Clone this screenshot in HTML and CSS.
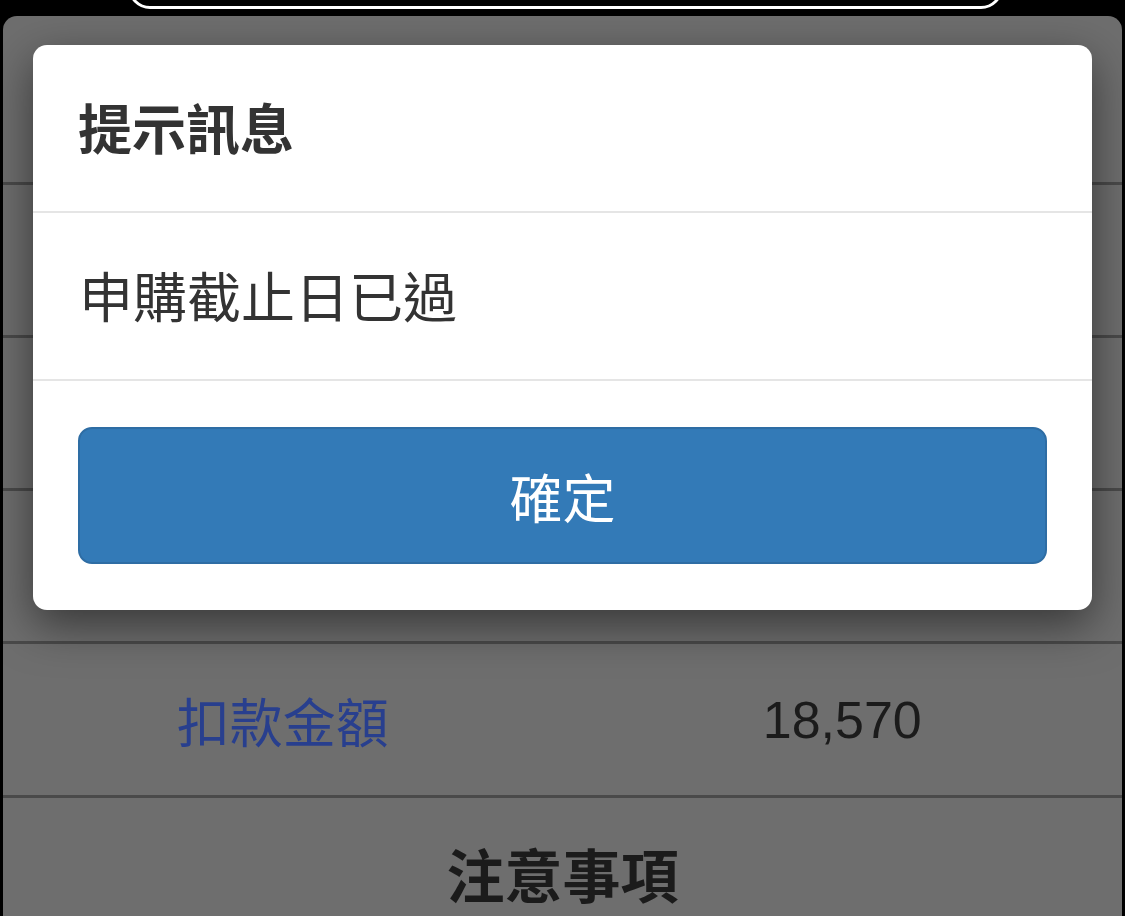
FILE: index.html
```html
<!DOCTYPE html>
<html lang="zh-Hant">
<head>
<meta charset="utf-8">
<title>提示訊息</title>
<link rel="stylesheet" href="styles.css">
</head>
<body>
<div class="statusbar"><div class="pill"></div></div>
<div class="panel">
  <div class="row row-head"></div>
  <div class="row"></div>
  <div class="row"></div>
  <div class="row"></div>
  <div class="row split">
    <div class="cell label">扣款金額</div>
    <div class="cell value">18,570</div>
  </div>
  <div class="row notes">注意事項</div>
</div>
<div class="modal">
  <div class="modal-header">提示訊息</div>
  <div class="modal-body">申購截止日已過</div>
  <div class="modal-footer"><button class="btn">確定</button></div>
</div>
</body>
</html>
```
FILE: styles.css
```css
html, body {
  margin: 0;
  padding: 0;
  background: #000;
  height: 916px;
  overflow: hidden;
  font-family: "Noto Sans CJK TC", "Noto Sans", sans-serif;
}
.statusbar {
  height: 16px;
  overflow: hidden;
}
.pill {
  width: 869px;
  height: 40px;
  margin: -37px 0 0 128px;
  border: 3px solid #fff;
  border-radius: 22px;
  background: #000;
}
.panel {
  margin: 0 3px;
  background: #6e6e6e;
  border-radius: 14px 14px 0 0;
  height: 900px;
  overflow: hidden;
}
.row {
  height: 150px;
  border-bottom: 3px solid #4a4a4a;
  box-sizing: content-box;
}
.row-head {
  height: 166px;
}
.split {
  display: flex;
  height: 151px;
}
.cell {
  flex: 1;
  display: flex;
  align-items: center;
  justify-content: center;
  font-size: 53px;
}
.label {
  color: #283f8e;
}
.value {
  color: #1b1b1b;
  font-family: "Liberation Sans", Arial, sans-serif;
  font-size: 52px;
}
.notes {
  display: flex;
  align-items: center;
  justify-content: center;
  padding-bottom: 8px;
  font-size: 58px;
  font-weight: bold;
  color: #1b1b1b;
  border-bottom: none;
}
.modal {
  position: absolute;
  left: 33px;
  top: 45px;
  width: 1059px;
  background: #fff;
  border-radius: 14px;
  box-shadow: 0 15px 45px rgba(0, 0, 0, 0.5);
  overflow: hidden;
}
.modal-header {
  height: 166px;
  display: flex;
  align-items: center;
  padding: 0 45px 4px;
  box-sizing: border-box;
  height: 168px;
  font-size: 54px;
  font-weight: bold;
  color: #333;
  border-bottom: 2px solid #e5e5e5;
}
.modal-body {
  height: 168px;
  box-sizing: border-box;
  display: flex;
  align-items: center;
  padding: 0 46px 4px;
  font-size: 54px;
  color: #333;
  border-bottom: 2px solid #e5e5e5;
}
.modal-footer {
  padding: 46px 45px 46px 45px;
}
.btn {
  display: block;
  width: 100%;
  height: 137px;
  background: #337ab7;
  border: 2px solid #2e6da4;
  border-radius: 14px;
  color: #fff;
  font-family: "Noto Sans CJK TC", "Noto Sans", sans-serif;
  font-size: 53px;
  padding: 0;
}
```
